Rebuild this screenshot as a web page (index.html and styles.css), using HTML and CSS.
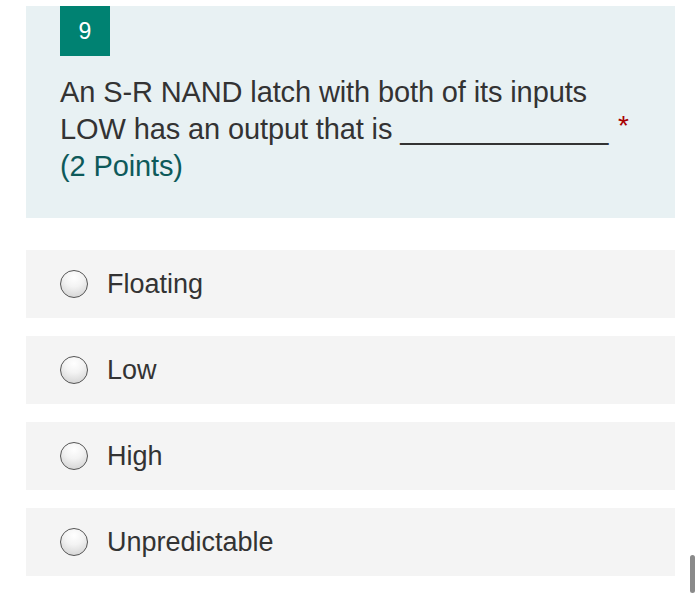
FILE: index.html
```html
<!DOCTYPE html>
<html>
<head>
<meta charset="utf-8">
<link rel="stylesheet" href="styles.css">
</head>
<body>
<div class="page">
  <section class="question">
    <div class="badge">9</div>
    <div class="qrow">
      <div class="qtext">
        <span class="title">An S-R NAND latch with both of its inputs LOW has an output that is _____________</span>
        <span class="points">(2 Points)</span>
      </div>
      <span class="req">*</span>
    </div>
  </section>
  <div class="options">
    <label class="option"><span class="radio"></span><span class="otext">Floating</span></label>
    <label class="option"><span class="radio"></span><span class="otext">Low</span></label>
    <label class="option"><span class="radio"></span><span class="otext">High</span></label>
    <label class="option"><span class="radio"></span><span class="otext">Unpredictable</span></label>
  </div>
</div>
<div class="scrollbar"></div>
</body>
</html>
```
FILE: styles.css
```css
html, body {
  margin: 0;
  padding: 0;
  background: #ffffff;
}
body {
  font-family: "Liberation Sans", Arial, sans-serif;
  color: #333333;
  width: 700px;
  height: 595px;
  overflow: hidden;
}
.page {
  padding: 6px 25px 0 26px;
}
.question {
  background: #e8f1f3;
  padding: 0 0 33px 34px;
}
.badge {
  width: 50px;
  height: 50px;
  background: #008272;
  color: #ffffff;
  font-size: 23px;
  display: flex;
  align-items: center;
  justify-content: center;
}
.qrow {
  display: flex;
  margin-top: 18px;
  align-items: flex-start;
}
.qtext {
  width: 556px;
  font-size: 29px;
  line-height: 37px;
  letter-spacing: -0.12px;
}
.title {
  color: #333333;
}
.points {
  display: block;
  color: #0e5a5a;
}
.req {
  color: #a80000;
  font-size: 28px;
  line-height: 37px;
  margin-top: 33px;
  margin-left: 2px;
}
.options {
  display: flex;
  flex-direction: column;
  gap: 18px;
  margin-top: 32px;
}
.option {
  display: flex;
  align-items: center;
  height: 68px;
  background: #f4f4f4;
  padding-left: 34px;
}
.radio {
  width: 26px;
  height: 26px;
  border: 1.6px solid #555555;
  border-radius: 50%;
  background: radial-gradient(circle at 50% 25%, #ffffff 0%, #f3f3f3 40%, #cccccc 100%);
  flex: none;
}
.otext {
  font-size: 27px;
  margin-left: 19px;
  color: #333333;
}
.scrollbar {
  position: absolute;
  left: 690px;
  top: 555px;
  width: 5px;
  height: 38px;
  border-radius: 3px;
  background: #8a8a8a;
}
```
